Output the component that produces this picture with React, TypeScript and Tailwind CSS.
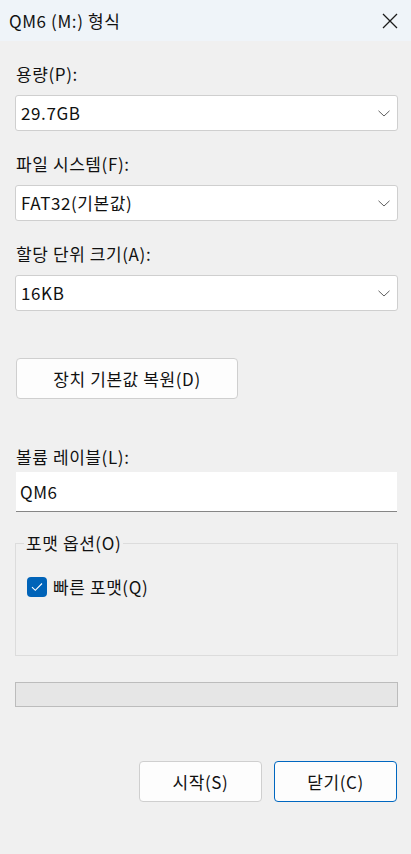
import React from 'react';

const font = { fontFamily: '"Noto Sans CJK KR", "Noto Sans", sans-serif' };

function Chevron() {
  return (
    <svg width="12" height="7" viewBox="0 0 12 7" fill="none" className="text-[#5f5f5f]">
      <path d="M0.5 0.8 L6 6 L11.5 0.8" stroke="currentColor" strokeWidth="1" />
    </svg>
  );
}

function Select({ value }: { value: string }) {
  return (
    <div className="flex h-[36px] items-center justify-between rounded-[3px] border border-[#cfcfcf] bg-white pl-[5px] pr-[7px] text-[17px] text-[#111]">
      <span>{value}</span>
      <Chevron />
    </div>
  );
}

function Label({ children, className = '' }: { children: React.ReactNode; className?: string }) {
  return <div className={`text-[17px] leading-6 text-[#111] ${className}`}>{children}</div>;
}

export default function App() {
  return (
    <div style={font} className="flex h-[854px] w-[411px] flex-col bg-[#f0f0f0] tracking-[0.6px] text-[#111]">
      <div className="flex h-[41px] items-center justify-between bg-[#eff4f9] pl-[9px] pr-[13px]">
        <span className="text-[17px]">QM6 (M:) 형식</span>
        <svg width="16" height="16" viewBox="0 0 16 16" fill="none">
          <path d="M1 1 L15 15 M15 1 L1 15" stroke="#1b1b1b" strokeWidth="1.3" />
        </svg>
      </div>

      <div className="flex flex-col pl-[15px] pr-[13px]">
        <Label className="mt-[21px] pl-[1px]">용량(P):</Label>
        <div className="mt-[9px]">
          <Select value="29.7GB" />
        </div>

        <Label className="mt-[21px] pl-[1px]">파일 시스템(F):</Label>
        <div className="mt-[9px]">
          <Select value="FAT32(기본값)" />
        </div>

        <Label className="mt-[21px] pl-[1px]">할당 단위 크기(A):</Label>
        <div className="mt-[9px]">
          <Select value="16KB" />
        </div>

        <button className="mt-[47px] ml-[1px] h-[41px] w-[222px] rounded-[4px] border border-[#cfcfcf] bg-[#fdfdfd] text-[17px]">
          장치 기본값 복원(D)
        </button>

        <Label className="mt-[46px] pl-[1px]">볼륨 레이블(L):</Label>
        <div className="mt-[3px] ml-[1px] mr-[1px] flex h-[40px] items-center border-b border-[#868686] bg-white pl-[4px] text-[17px]">
          QM6
        </div>

        <fieldset className="mt-[19px] h-[125px] border border-[#dcdcdc] px-[11px]">
          <legend className="ml-[-3px] px-[2px] text-[17px] leading-6">포맷 옵션(O)</legend>
          <div className="mt-[20px] flex items-center gap-[6px]">
            <span className="flex h-[20px] w-[20px] items-center justify-center rounded-[4px] bg-[#0063b8]">
              <svg width="12" height="10" viewBox="0 0 12 10" fill="none">
                <path d="M1 5.2 L4.3 8.3 L11 1.5" stroke="white" strokeWidth="1.1" />
              </svg>
            </span>
            <span className="text-[17px] leading-6">빠른 포맷(Q)</span>
          </div>
        </fieldset>

        <div className="mt-[26px] h-[25px] border border-[#bcbcbc] bg-[#e6e6e6]" />

        <div className="mt-[54px] flex justify-end gap-[12px] pr-[1px]">
          <button className="h-[41px] w-[123px] rounded-[4px] border border-[#cfcfcf] bg-[#fdfdfd] text-[17px]">
            시작(S)
          </button>
          <button className="h-[41px] w-[123px] rounded-[4px] border border-[#0067c0] bg-[#fdfdfd] text-[17px]">
            닫기(C)
          </button>
        </div>
      </div>
    </div>
  );
}
